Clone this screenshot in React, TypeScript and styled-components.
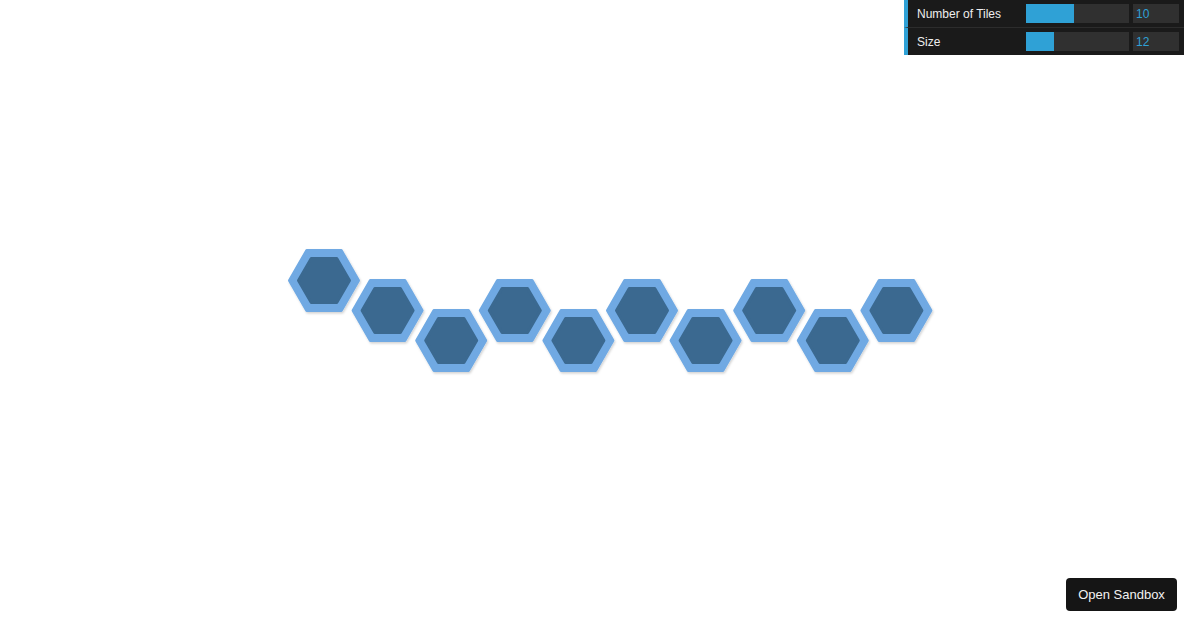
import React from 'react';
import styled, { createGlobalStyle } from 'styled-components';

const GlobalStyle = createGlobalStyle`
  html, body {
    margin: 0;
    padding: 0;
    background: #ffffff;
    font-family: "Liberation Sans", Arial, sans-serif;
  }
`;

const Stage = styled.div`
  position: relative;
  width: 100vw;
  height: 100vh;
  overflow: hidden;
  background: #ffffff;
`;

const Canvas = styled.svg`
  display: block;
  width: 100%;
  height: 100%;
`;

const Gui = styled.div`
  position: absolute;
  top: 0;
  right: 16px;
  width: 280px;
  background: #1a1a1a;
  font-family: "Liberation Sans", Arial, sans-serif;
  font-size: 12px;
  color: #eeeeee;
`;

const Row = styled.div`
  display: grid;
  grid-template-columns: 1fr 103px 46px;
  column-gap: 4px;
  align-items: center;
  height: 27px;
  padding-right: 5px;
  border-left: 4px solid #2fa1d6;
  & + & {
    border-top: 1px solid #2c2c2c;
  }
`;

const Label = styled.span`
  padding-left: 9px;
  white-space: nowrap;
`;

const Track = styled.div`
  height: 19px;
  background: #303030;
  overflow: hidden;
`;

const Fill = styled.div`
  height: 100%;
  background: #2fa1d6;
`;

const NumberBox = styled.div`
  height: 19px;
  line-height: 20px;
  background: #303030;
  color: #2fa1d6;
  padding-left: 3px;
  font-size: 12px;
`;

const SandboxButton = styled.button`
  position: absolute;
  right: 23px;
  bottom: 19px;
  width: 111px;
  height: 33px;
  border: none;
  border-radius: 4px;
  background: #151515;
  color: #f2f2f2;
  font-family: "Liberation Sans", Arial, sans-serif;
  font-size: 13px;
  cursor: pointer;
`;

const controls = [
  { label: 'Number of Tiles', value: 10, fill: 47 },
  { label: 'Size', value: 12, fill: 27 },
];

const hexPoints = (cx: number, cy: number, r: number) =>
  Array.from({ length: 6 }, (_, k) => {
    const a = (Math.PI / 3) * k;
    return `${(cx + r * Math.cos(a)).toFixed(2)},${(cy + r * Math.sin(a)).toFixed(2)}`;
  }).join(' ');

const tiles = Array.from({ length: 10 }, (_, i) => ({
  x: 324 + i * 63.6,
  y: i === 0 ? 280.5 : i % 2 === 1 ? 310.5 : 340.5,
}));

function App() {
  return (
    <Stage>
      <GlobalStyle />
      <Canvas viewBox="0 0 1200 630" preserveAspectRatio="xMidYMid meet">
        <defs>
          <filter id="tileShadow" x="-20%" y="-20%" width="140%" height="140%">
            <feDropShadow dx="1" dy="1.5" stdDeviation="1.2" floodColor="#000" floodOpacity="0.18" />
          </filter>
        </defs>
        {tiles.map(({ x, y }, i) => (
          <g key={i}>
            <polygon
              points={hexPoints(x, y, 34.5)}
              fill="#6fa9e3"
              stroke="#6fa9e3"
              strokeWidth={3}
              strokeLinejoin="round"
              filter="url(#tileShadow)"
            />
            <polygon
              points={hexPoints(x, y, 25.5)}
              fill="#3b6990"
              stroke="#3b6990"
              strokeWidth={3}
              strokeLinejoin="round"
            />
          </g>
        ))}
      </Canvas>

      <Gui>
        {controls.map(c => (
          <Row key={c.label}>
            <Label>{c.label}</Label>
            <Track>
              <Fill style={{ width: `${c.fill}%` }} />
            </Track>
            <NumberBox>{c.value}</NumberBox>
          </Row>
        ))}
      </Gui>

      <SandboxButton>Open Sandbox</SandboxButton>
    </Stage>
  );
}

export default App;
